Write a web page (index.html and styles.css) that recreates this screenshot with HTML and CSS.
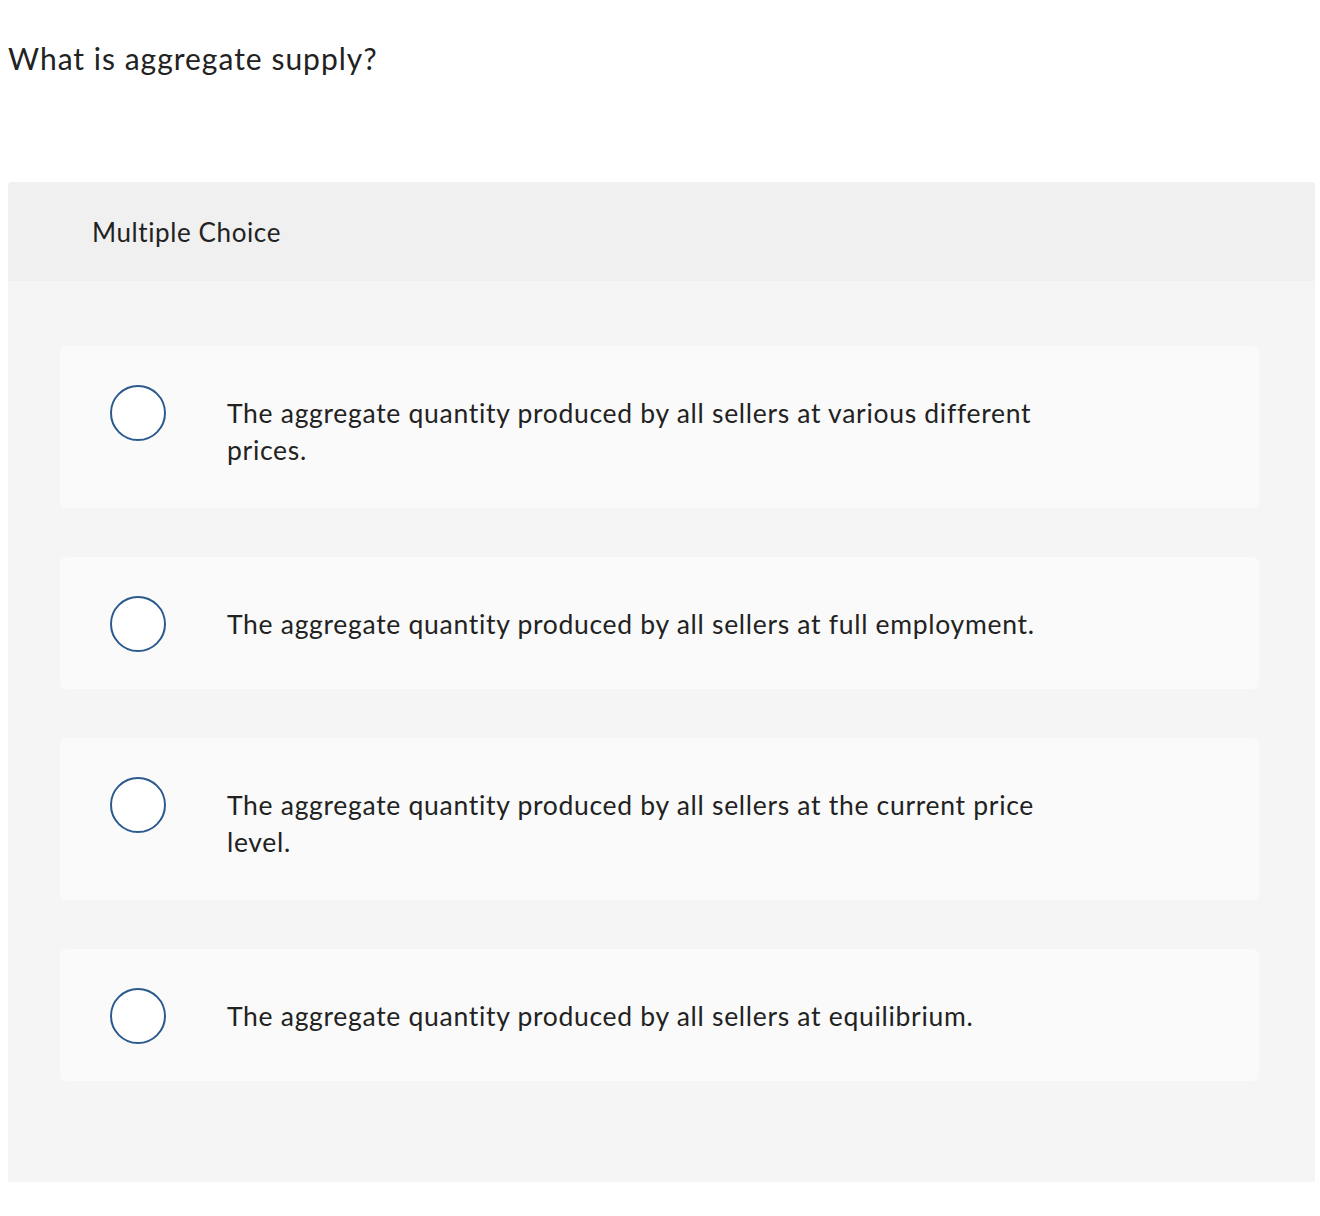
FILE: index.html
```html
<!DOCTYPE html>
<html>
<head>
<meta charset="utf-8">
<link rel="stylesheet" href="styles.css">
</head>
<body>
<div class="page">
  <div class="question">What is aggregate supply?</div>
  <div class="panel">
    <div class="panel-head">Multiple Choice</div>
    <div class="panel-body">
      <div class="choice">
        <span class="radio"></span>
        <div class="choice-text">The aggregate quantity produced by all sellers at various different prices.</div>
      </div>
      <div class="choice">
        <span class="radio"></span>
        <div class="choice-text">The aggregate quantity produced by all sellers at full employment.</div>
      </div>
      <div class="choice">
        <span class="radio"></span>
        <div class="choice-text">The aggregate quantity produced by all sellers at the current price level.</div>
      </div>
      <div class="choice">
        <span class="radio"></span>
        <div class="choice-text">The aggregate quantity produced by all sellers at equilibrium.</div>
      </div>
    </div>
  </div>
</div>
</body>
</html>
```

FILE: styles.css
```css
html, body {
  margin: 0;
  padding: 0;
  background: #ffffff;
}
body {
  font-family: Lato, "Open Sans", Arial, sans-serif;
  color: #222222;
}
.page {
  padding: 0 8px;
}
.question {
  font-size: 30px;
  letter-spacing: 1px;
  line-height: 36px;
  padding-top: 40px;
  height: 182px;
  box-sizing: border-box;
}
.panel {
  width: 1307px;
  border-radius: 4px 4px 0 0;
  overflow: hidden;
  background: #f5f5f5;
}
.panel-head {
  background: #f0f0f0;
  height: 99px;
  box-sizing: border-box;
  padding-left: 84px;
  display: flex;
  align-items: center;
  font-size: 26px;
  letter-spacing: 0.6px;
}
.panel-body {
  padding: 65px 56px 101px 52px;
  display: flex;
  flex-direction: column;
  gap: 49px;
}
.choice {
  background: #fafafa;
  border-radius: 6px;
  display: flex;
  align-items: flex-start;
  padding: 39px 50px 37px;
  box-sizing: border-box;
}
.radio {
  flex: none;
  width: 56px;
  height: 56px;
  box-sizing: border-box;
  border: 2px solid #2b5a8e;
  border-radius: 50%;
  background: #ffffff;
  margin-right: 61px;
}
.choice-text {
  font-size: 26.5px;
  letter-spacing: 0.7px;
  line-height: 37px;
  max-width: 830px;
  padding: 10px 0 2px;
}
```
